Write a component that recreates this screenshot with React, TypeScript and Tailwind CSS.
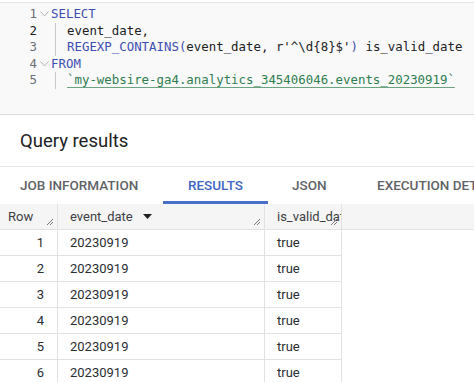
import React from "react";

const mono = { fontFamily: '"DejaVu Sans Mono", "Liberation Mono", monospace' };

function Fold() {
  return (
    <svg width="9" height="6" viewBox="0 0 9 6" className="text-[#b0b4b8]">
      <path d="M0.5 0.5 L4.5 5 L8.5 0.5" fill="none" stroke="currentColor" strokeWidth="1" />
    </svg>
  );
}

function Grip() {
  return (
    <svg width="8" height="8" viewBox="0 0 8 8" className="absolute right-[3px] bottom-[3px] text-[#777]">
      <path d="M1 7 L7 1 M4 7 L7 4" stroke="currentColor" strokeWidth="1" />
    </svg>
  );
}

const lines: { n: number; fold?: boolean; indent?: boolean; active?: boolean; body: React.ReactNode }[] = [
  { n: 1, fold: true, body: <span className="text-[#3d4fb0]">SELECT</span> },
  { n: 2, indent: true, active: true, body: <span className="text-[#202124]">event_date,</span> },
  {
    n: 3,
    indent: true,
    body: (
      <>
        <span className="text-[#3d4fb0]">REGEXP_CONTAINS(</span>
        <span className="text-[#202124]">event_date, r'^\d{"{"}8{"}"}$'</span>
        <span className="text-[#3d4fb0]">)</span>
        <span className="text-[#202124]">{" "}is_valid_date</span>
      </>
    ),
  },
  { n: 4, fold: true, body: <span className="text-[#3d4fb0]">FROM</span> },
  {
    n: 5,
    indent: true,
    body: (
      <span className="text-[#2e7d4f] underline decoration-[#6aa37f] underline-offset-[3px]">
        `my-websire-ga4.analytics_345406046.events_20230919`
      </span>
    ),
  },
];

const rows = [1, 2, 3, 4, 5, 6];

export default function App() {
  return (
    <div className="w-[474px] h-[382px] overflow-hidden bg-white" style={{ fontFamily: 'Roboto, "Noto Sans", sans-serif' }}>
      {/* editor */}
      <div className="mt-[2px] h-[113px] bg-[#f9f9f9] border-t border-[#e6e6e6] border-b border-b-[#dcdcdc] pt-[3px]">
        {lines.map((l) => (
          <div key={l.n} className="flex items-center h-[16.6px] text-[12.4px] leading-none whitespace-nowrap" style={mono}>
            <span className={`w-[37px] shrink-0 text-right ${l.active ? "text-[#202124]" : "text-[#6b6f73]"}`}>{l.n}</span>
            <span className="w-[14px] shrink-0 flex justify-center">{l.fold && <Fold />}</span>
            {l.indent && (
              <span className="w-[16px] shrink-0 h-full flex">
                <span className="ml-[4px] w-px h-full bg-[#c8c8c8]" />
              </span>
            )}
            <span className="whitespace-pre">{l.body}</span>
          </div>
        ))}
      </div>

      {/* title */}
      <div className="h-[52px] border-b border-[#e4e4e4] flex items-center pl-5 pt-[3px] text-[18.5px] text-[#202124]">Query results</div>

      {/* tabs */}
      <div className="h-[37px] flex text-[13.5px] font-medium text-[#5f6368] whitespace-nowrap">
        <div className="w-[163px] shrink-0 pl-5 flex items-center">JOB INFORMATION</div>
        <div className="w-[105px] shrink-0 flex items-center justify-center text-[#3f66c4] border-b-[3px] border-[#4a6fc9] pt-[3px]">RESULTS</div>
        <div className="w-[84px] shrink-0 flex items-center pl-[24px]">JSON</div>
        <div className="shrink-0 flex items-center pl-[25px]">EXECUTION DETAILS</div>
      </div>

      {/* table */}
      <div className="text-[13px]">
        <div className="flex h-[26px] bg-[#f5f5f5] border-b border-[#e2e2e2] text-[#3c4043]">
          <div className="relative w-[58px] shrink-0 border-r border-[#e2e2e2] pl-2 flex items-center">Row<Grip /></div>
          <div className="relative w-[207px] shrink-0 border-r border-[#e2e2e2] pl-3 flex items-center gap-[10px]">
            event_date
            <svg width="9" height="5" viewBox="0 0 9 5"><path d="M0 0 H9 L4.5 5 Z" fill="#202124" /></svg>
            <Grip />
          </div>
          <div className="relative w-[77px] shrink-0 border-r border-[#e2e2e2] pl-3 flex items-center overflow-hidden whitespace-nowrap">
            <span>is_valid_date</span>
            <Grip />
          </div>
        </div>
        {rows.map((r) => (
          <div key={r} className="flex h-[26px] text-[#2a2d31]">
            <div className="w-[58px] shrink-0 border-r border-b border-[#e2e2e2] flex items-center justify-end pr-[13px]">{r}</div>
            <div className="w-[207px] shrink-0 border-r border-b border-[#e2e2e2] pl-3 flex items-center">20230919</div>
            <div className="w-[77px] shrink-0 border-r border-b border-[#e2e2e2] pl-3 flex items-center">true</div>
          </div>
        ))}
      </div>
    </div>
  );
}
